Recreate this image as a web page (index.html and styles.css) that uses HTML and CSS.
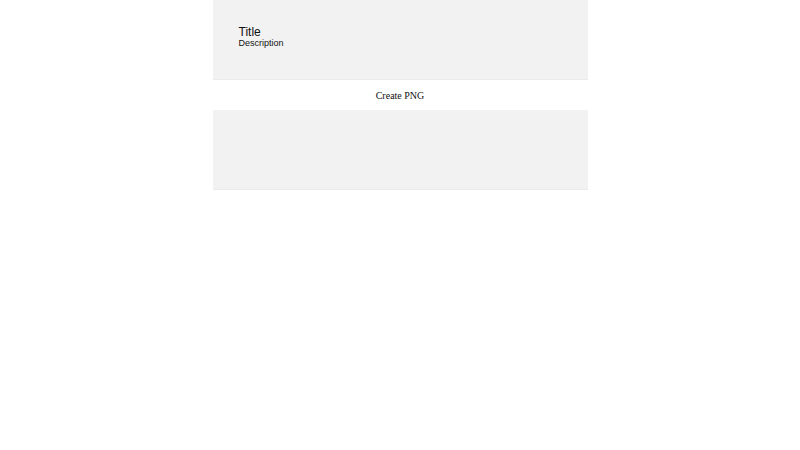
FILE: index.html
```html
<!DOCTYPE html>
<html>
<head>
<meta charset="utf-8">
<link rel="stylesheet" href="styles.css">
</head>
<body>
<div class="page">
  <div class="card">
    <div class="title">Title</div>
    <div class="desc">Description</div>
  </div>
  <div class="action">Create PNG</div>
  <div class="card empty"></div>
</div>
</body>
</html>
```

FILE: styles.css
```css
html, body {
  margin: 0;
  padding: 0;
  background: #fff;
}
.page {
  width: 375px;
  margin: 0 auto;
  display: flex;
  flex-direction: column;
}
.card {
  height: 80px;
  box-sizing: border-box;
  background: #f2f2f2;
  border-bottom: 1px solid #ebebeb;
  padding: 26px 26px;
  font-family: "Liberation Sans", Arial, sans-serif;
  color: #111;
}
.title {
  font-size: 12px;
  line-height: 12px;
}
.desc {
  font-size: 9px;
  line-height: 10px;
}
.action {
  height: 30px;
  display: flex;
  align-items: center;
  justify-content: center;
  font-family: "Liberation Serif", "Times New Roman", serif;
  font-size: 10px;
  color: #111;
}
```
